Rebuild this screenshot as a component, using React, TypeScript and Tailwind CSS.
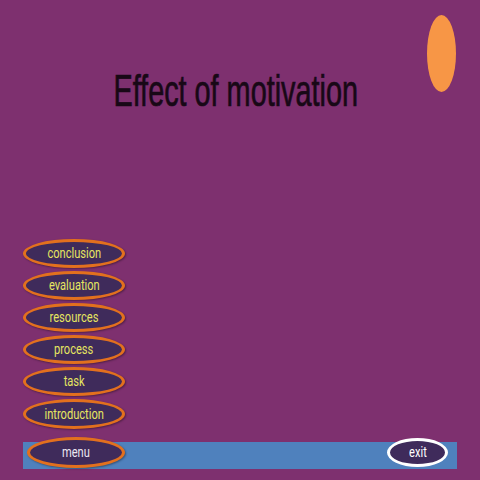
const navItems = [
  { label: "conclusion", h: "h-[29px]" },
  { label: "evaluation", h: "h-[29px]" },
  { label: "resources", h: "h-[29px]" },
  { label: "process", h: "h-[29px]" },
  { label: "task", h: "h-[29px]" },
  { label: "introduction", h: "h-[30px]" },
]

function Oval({
  label,
  h,
  w = "w-[102px]",
  text = "text-[#e6e660]",
}: {
  label: string
  h: string
  w?: string
  text?: string
}) {
  return (
    <div
      className={`${w} ${h} flex items-center justify-center rounded-[50%] border-[3px] border-[#e2701e] bg-[#3f2b5b] shadow-[1px_1px_2px_rgba(0,0,0,0.35)]`}
    >
      <span className={`scale-x-[0.74] text-[15px] leading-none ${text} font-['Roboto',sans-serif]`}>
        {label}
      </span>
    </div>
  )
}

export default function App() {
  return (
    <div className="w-[480px] h-[480px] overflow-hidden bg-[#7e306f] pt-[15px] font-['Liberation_Sans',sans-serif]">
      {/* header: title + orange ellipse */}
      <div className="flex items-start">
        <div className="ml-[44px] flex-1 flex justify-center pt-[54px]">
          <h1 className="scale-x-[0.655] whitespace-nowrap text-[44px] leading-[44px] text-[#180816] [-webkit-text-stroke:0.7px_#180816]">
            Effect of motivation
          </h1>
        </div>
        <div className="mr-[24px] w-[29px] h-[77px] rounded-[50%] bg-[#f79646]" />
      </div>

      {/* navigation column */}
      <div className="mt-[126px] ml-[23px] flex flex-col gap-[3px]">
        {navItems.map((item) => (
          <Oval key={item.label} label={item.label} h={item.h} />
        ))}
      </div>

      {/* bottom bar */}
      <div className="mt-[13px] ml-[23px] w-[434px] h-[27px] bg-[#4f81bd] flex items-start justify-between pl-[4px] pr-[9px]">
        <div className="-mt-[5px]">
          <Oval label="menu" h="h-[31px]" w="w-[98px]" text="text-[#ece6f2]" />
        </div>
        <div className="-mt-[4px] w-[61px] h-[29px] flex items-center justify-center rounded-[50%] border-[3px] border-white bg-[#3f2b5b]">
          <span className="scale-x-[0.74] text-[15px] leading-none text-white font-['Roboto',sans-serif]">exit</span>
        </div>
      </div>
    </div>
  )
}
